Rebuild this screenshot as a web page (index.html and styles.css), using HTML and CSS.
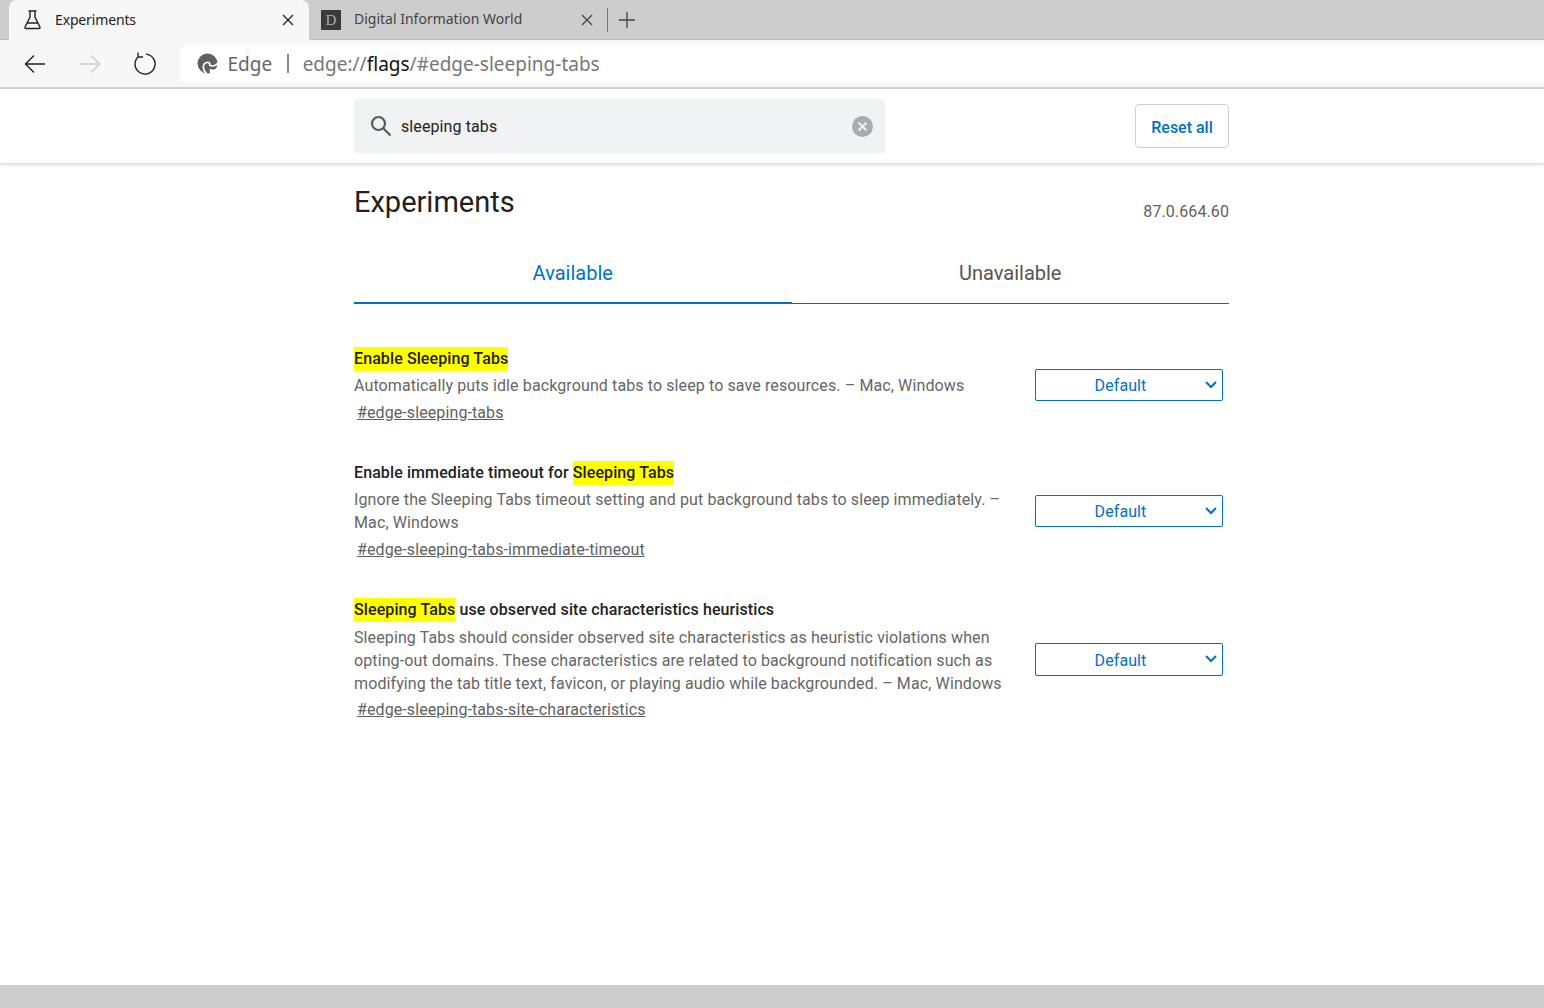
FILE: index.html
```html
<!DOCTYPE html>
<html lang="en">
<head>
<meta charset="utf-8">
<title>Experiments</title>
<link rel="stylesheet" href="styles.css">
</head>
<body>
<div class="window">
  <div class="tabstrip">
    <div class="tab tab-active">
      <svg class="tab-icon" width="20" height="20" viewBox="0 0 20 20" fill="none" stroke="#222" stroke-width="1.4"><path d="M5.500 1h8M7 1.500v5.500L2 17.200q-.4 1.300 1 1.300h13q1.400 0 1-1.300L12 7V1.500M4.500 13h10"/></svg>
      <span class="tab-title">Experiments</span>
      <svg class="tab-close" width="12" height="12" viewBox="0 0 12 12" stroke="#222" stroke-width="1.3"><path d="M1 1l10 10M11 1L1 11"/></svg>
    </div>
    <div class="tab tab-other">
      <span class="favicon">D</span>
      <span class="tab-title">Digital Information World</span>
      <svg class="tab-close" width="12" height="12" viewBox="0 0 12 12" stroke="#444" stroke-width="1.3"><path d="M1 1l10 10M11 1L1 11"/></svg>
    </div>
    <span class="tab-sep"></span>
    <svg class="new-tab" width="18" height="18" viewBox="0 0 18 18" stroke="#444" stroke-width="1.3"><path d="M9 1v16M1 9h16"/></svg>
  </div>
  <div class="toolbar">
    <svg class="nav nav-back" width="22" height="20" viewBox="0 0 22 20" fill="none" stroke="#222" stroke-width="1.4"><path d="M21 10H1.500M10 1.500L1.500 10l8.500 8.500"/></svg>
    <svg class="nav nav-forward" width="22" height="20" viewBox="0 0 22 20" fill="none" stroke="#ccc" stroke-width="1.4"><path d="M1 10h19.500M12 1.500l8.500 8.500-8.500 8.500"/></svg>
    <svg class="nav nav-reload" width="24" height="24" viewBox="0 0 24 24" fill="none" stroke="#222" stroke-width="1.4"><path d="M5.500 4.500A10 10 0 1 0 13 2.100M5 .5v4.500h5"/></svg>
    <div class="omnibox">
      <svg class="edge-logo" width="21" height="21" viewBox="0 0 21 21"><circle cx="10.500" cy="10.500" r="10" fill="#5f5f5f"/><path fill="#fff" d="M12.500 15.800c3 1.500 6 .8 8.500-1.800v7h-8z"/><path fill="none" stroke="#fff" stroke-width="1.700" d="M9.500 20.500C5 16.500 5.500 10 10 9.500c2.500-.3 3.300 1.500 2.700 2.800 2.500 1.200 6 .5 8-2"/></svg>
      <span class="omni-edge">Edge</span>
      <span class="omni-sep"></span>
      <span class="omni-url">edge://<span class="omni-host">flags</span>/#edge-sleeping-tabs</span>
    </div>
  </div>
  <header class="page-head">
    <div class="head-inner">
      <div class="search">
        <svg class="search-icon" width="24" height="24" viewBox="0 0 24 24" fill="none" stroke="#5a5a5a" stroke-width="2.200"><circle cx="9.500" cy="9.500" r="6.500"/><path d="M14.500 14.500l7 7"/></svg>
        <span class="search-text">sleeping tabs</span>
        <svg class="search-clear" width="21" height="21" viewBox="0 0 21 21"><circle cx="10.500" cy="10.500" r="10.500" fill="#a9abad"/><path d="M6.500 6.500l8 8M14.500 6.500l-8 8" stroke="#f1f2f4" stroke-width="2"/></svg>
      </div>
      <button class="reset">Reset all</button>
    </div>
  </header>
  <main class="content">
    <div class="title-row">
      <h1>Experiments</h1>
      <span class="version">87.0.664.60</span>
    </div>
    <div class="tabs">
      <div class="pane-tab pane-active">Available</div>
      <div class="pane-tab">Unavailable</div>
    </div>
    <section class="flag flag-1">
      <div class="flag-text">
        <h2><mark>Enable Sleeping Tabs</mark></h2>
        <p>Automatically puts idle background tabs to sleep to save resources. – Mac, Windows</p>
        <a href="#a">#edge-sleeping-tabs</a>
      </div>
      <div class="select">Default<svg width="12" height="8" viewBox="0 0 12 8" fill="none" stroke="#0072c6" stroke-width="2"><path d="M1 1l5 5 5-5"/></svg></div>
    </section>
    <section class="flag flag-2">
      <div class="flag-text">
        <h2>Enable immediate timeout for <mark>Sleeping Tabs</mark></h2>
        <p>Ignore the Sleeping Tabs timeout setting and put background tabs to sleep immediately. – Mac, Windows</p>
        <a href="#b">#edge-sleeping-tabs-immediate-timeout</a>
      </div>
      <div class="select">Default<svg width="12" height="8" viewBox="0 0 12 8" fill="none" stroke="#0072c6" stroke-width="2"><path d="M1 1l5 5 5-5"/></svg></div>
    </section>
    <section class="flag flag-3">
      <div class="flag-text">
        <h2><mark>Sleeping Tabs</mark> use observed site characteristics heuristics</h2>
        <p>Sleeping Tabs should consider observed site characteristics as heuristic violations when opting-out domains. These characteristics are related to background notification such as modifying the tab title text, favicon, or playing audio while backgrounded. – Mac, Windows</p>
        <a href="#c">#edge-sleeping-tabs-site-characteristics</a>
      </div>
      <div class="select">Default<svg width="12" height="8" viewBox="0 0 12 8" fill="none" stroke="#0072c6" stroke-width="2"><path d="M1 1l5 5 5-5"/></svg></div>
    </section>
  </main>
  <div class="taskbar"></div>
</div>
</body>
</html>
```

FILE: styles.css
```css
* { box-sizing: border-box; }
html, body { margin: 0; padding: 0; background: #fff; }
.window { height: 1008px; overflow: hidden; display: flex; flex-direction: column; font-family: Roboto, "Liberation Sans", sans-serif; }

.tabstrip { height: 40px; flex: none; background: #cdcdcd; display: flex; align-items: center; padding-left: 9px; border-bottom: 1px solid #bcbcbc; font-family: "Noto Sans", sans-serif; font-size: 14px; }
.tab { height: 40px; display: flex; align-items: center; }
.tab-active { width: 300px; background: #f7f7f7; border-radius: 8px 8px 0 0; padding: 0 15px 0 14px; color: #222; margin-bottom: -1px; position: relative; }
.tab-icon { flex: none; }
.tab-title { flex: 1; margin-bottom: 2px; }
.tab-active .tab-title { margin-left: 12px; letter-spacing: -.15px; }
.tab-other { width: 298px; padding: 0 14px 0 12px; color: #444; }
.tab-other .tab-title { margin-left: 13px; }
.favicon { width: 20px; height: 20px; background: #3a3a3a; color: #aaa; font: 15px/20px "Liberation Serif", serif; text-align: center; flex: none; }
.tab-close { flex: none; }
.tab-sep { width: 1px; height: 24px; background: #777; }
.new-tab { margin-left: 10px; }

.toolbar { height: 49px; flex: none; background: #f7f7f7; border-bottom: 2px solid #d3d3d3; display: flex; align-items: center; padding: 0 0 0 24px; }
.nav { flex: none; }
.nav-forward { margin-left: 33px; }
.nav-reload { margin-left: 32px; }
.omnibox { flex: 1; height: 38px; margin-left: 23px; background: #fff; border-radius: 6px 0 0 6px; display: flex; align-items: center; padding-left: 17px; font-family: "Noto Sans", sans-serif; font-size: 19px; color: #666; }
.omni-edge { margin-left: 9.5px; }
.omni-sep { width: 2px; height: 19px; background: #888; margin: 0 14px 0 14.5px; }
.omni-url { color: #777; }
.omni-host { color: #111; }

.page-head { height: 74px; flex: none; background: #fff; box-shadow: 0 2px 3px rgba(0,0,0,.14); position: relative; }
.head-inner { width: 875px; margin-left: 354px; height: 74px; display: flex; align-items: center; justify-content: space-between; }
.search { width: 531px; height: 54px; background: #f1f2f4; border-radius: 3px; display: flex; align-items: center; padding: 0 12px 0 15px; }
.search-icon { flex: none; }
.search-text { flex: 1; margin-left: 8px; font-size: 16px; color: #222; letter-spacing: .1px; }
.search-clear { flex: none; }
.reset { width: 94px; height: 44px; background: #fff; border: 1px solid #cfcfcf; border-radius: 4px; color: #0072c6; font: 500 16px Roboto, sans-serif; padding: 2px 0 0; }

.content { width: 875px; margin-left: 354px; flex: 1; }
.title-row { height: 81px; display: flex; justify-content: space-between; padding-top: 19px; }
h1 { margin: 0; font: 400 29px/40px Roboto, sans-serif; color: #222; }
.version { font-size: 16px; line-height: 20px; color: #5f5f5f; margin-top: 20px; letter-spacing: .1px; }
.tabs { display: flex; height: 60px; border-bottom: 1px solid #555; }
.pane-tab { flex: 1; text-align: center; font-size: 20px; line-height: 58px; color: #555; }
.pane-active { color: #0072c6; border-bottom: 2px solid #0072c6; height: 60px; }

.flag { display: flex; justify-content: space-between; padding-right: 6px; }
.flag-1 { margin-top: 43px; height: 114px; }
.flag-2 { height: 137px; }
.flag-3 { height: 140px; }
.flag-text { width: 650px; }
h2 { margin: 0; font-size: 16px; font-weight: 500; line-height: 24px; color: #222; letter-spacing: .1px; }
mark { background: #ff0; color: #222; padding: 2px 0 3px; }
.flag p { margin: 3px 0 0; font-size: 16px; line-height: 23px; color: #666; letter-spacing: .11px; }
.flag a { display: inline-block; margin: 4px 0 0 3px; font-size: 16px; line-height: 23px; color: #5f5f5f; letter-spacing: .1px; }
.flag-3 p { margin-top: 4px; }
.flag-3 a { margin-top: 3px; }
.select { width: 188px; height: 32px; flex: none; border: 1px solid #0072c6; border-radius: 2px; color: #0072c6; font-size: 16px; line-height: 32px; text-align: center; padding-right: 17px; position: relative; letter-spacing: .1px; }
.select svg { position: absolute; right: 5px; top: 11px; }
.flag-1 .select { margin-top: 22px; }
.flag-2 .select { margin-top: 34px; }
.flag-3 .select { margin-top: 45px; height: 33px; line-height: 33px; }
.taskbar { height: 23px; flex: none; background: #cdcdcd; }
```
